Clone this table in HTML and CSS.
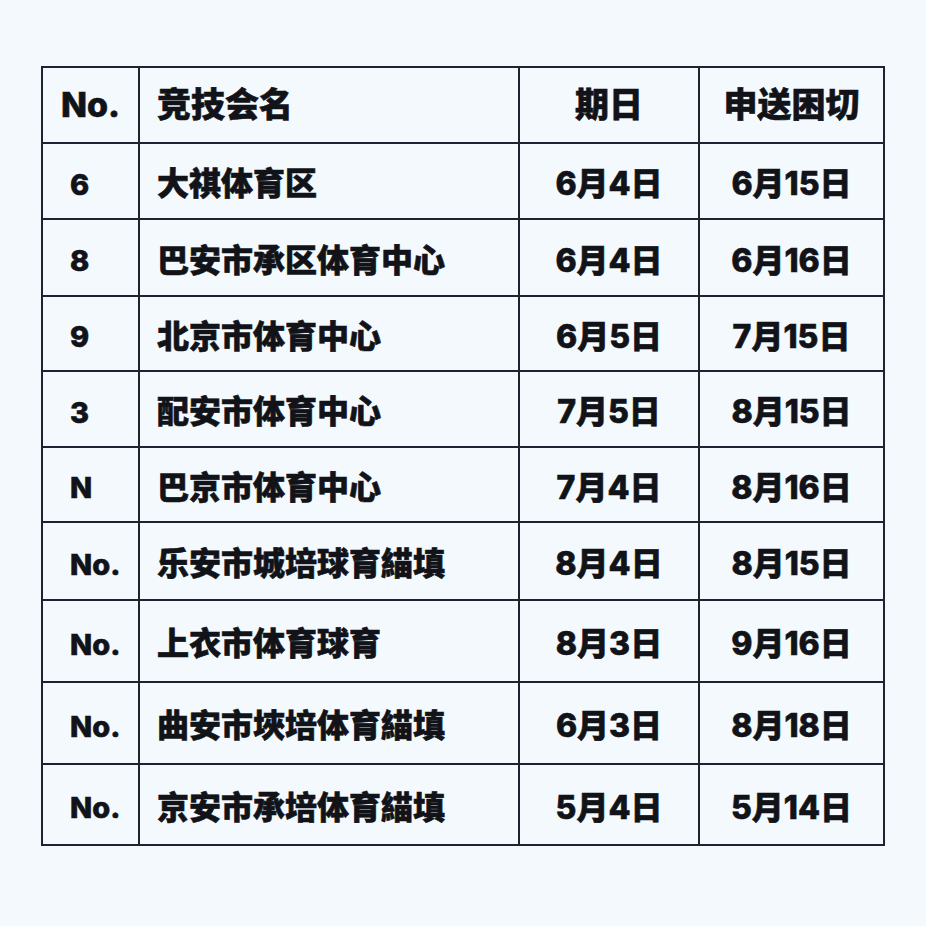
FILE: index.html
```html
<!DOCTYPE html>
<html lang="zh">
<head>
<meta charset="utf-8">
<title>竞技会日程</title>
<link rel="stylesheet" href="styles.css">
</head>
<body>
<table class="schedule">
  <colgroup>
    <col class="c-no">
    <col class="c-name">
    <col class="c-date">
    <col class="c-dead">
  </colgroup>
  <thead>
    <tr>
      <th class="no">No.</th>
      <th class="name">竞技会名</th>
      <th class="date">期日</th>
      <th class="date">申送困切</th>
    </tr>
  </thead>
  <tbody>
    <tr><td class="no">6</td><td class="name">大祺体育区</td><td class="date">6月4日</td><td class="date">6月15日</td></tr>
    <tr><td class="no">8</td><td class="name">巴安市承区体育中心</td><td class="date">6月4日</td><td class="date">6月16日</td></tr>
    <tr><td class="no">9</td><td class="name">北京市体育中心</td><td class="date">6月5日</td><td class="date">7月15日</td></tr>
    <tr><td class="no">3</td><td class="name">配安市体育中心</td><td class="date">7月5日</td><td class="date">8月15日</td></tr>
    <tr><td class="no">N</td><td class="name">巴京市体育中心</td><td class="date">7月4日</td><td class="date">8月16日</td></tr>
    <tr><td class="no">No.</td><td class="name">乐安市城培球育緢填</td><td class="date">8月4日</td><td class="date">8月15日</td></tr>
    <tr><td class="no">No.</td><td class="name">上衣市体育球育</td><td class="date">8月3日</td><td class="date">9月16日</td></tr>
    <tr><td class="no">No.</td><td class="name">曲安市埉培体育緢填</td><td class="date">6月3日</td><td class="date">8月18日</td></tr>
    <tr><td class="no">No.</td><td class="name">京安市承培体育緢填</td><td class="date">5月4日</td><td class="date">5月14日</td></tr>
  </tbody>
</table>
</body>
</html>
```
FILE: styles.css
```css
html, body {
  margin: 0;
  background: #f3f9fc;
}
body {
  padding: 66px 0 0 41px;
  font-family: "Inter", "Noto Sans CJK SC", "Noto Sans", sans-serif;
  color: #111318;
}
.schedule {
  border-collapse: collapse;
  table-layout: fixed;
  width: 842px;
}
.c-no { width: 97px; }
.c-name { width: 380px; }
.c-date { width: 180px; }
.c-dead { width: 185px; }
.schedule th,
.schedule td {
  border: 2px solid #1d2330;
  padding: 0;
  font-weight: 800;
  line-height: 1;
  vertical-align: middle;
  white-space: nowrap;
  -webkit-text-stroke: 0.6px #111318;
}
.schedule th {
  font-size: 34px;
  height: 74px;
}
.schedule td {
  font-size: 32px;
  height: 68px;
  padding-top: 6px;
}
.schedule .no { text-align: center; }
.schedule .name { text-align: left; padding-left: 17px; }
.schedule .date { text-align: center; }
.schedule td.no {
  font-size: 29px;
  text-align: left;
  padding-left: 27px;
}

.schedule tbody tr:nth-child(2) td { height: 69px; }
.schedule tbody tr:nth-child(3) td { height: 67px; }
.schedule tbody tr:nth-child(5) td { height: 67px; }
.schedule tbody tr:nth-child(6) td { height: 70px; }
.schedule tbody tr:nth-child(7) td { height: 74px; }
.schedule tbody tr:nth-child(8) td { height: 74px; }
.schedule tbody tr:nth-child(9) td { height: 73px; }
```
